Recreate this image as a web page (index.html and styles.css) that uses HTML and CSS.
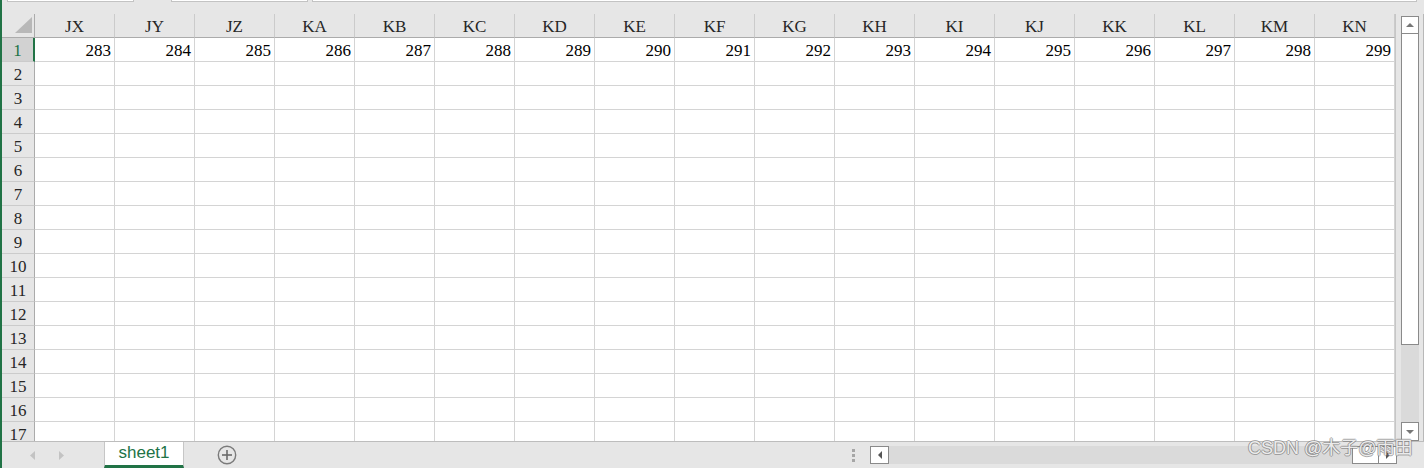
FILE: index.html
```html
<!DOCTYPE html>
<html lang="en">
<head>
    <meta charset="UTF-8">
    <meta name="viewport" content="width=device-width, initial-scale=1.0">
    <title>sheet1</title>
    <link rel="stylesheet" href="styles.css">
</head>
<body>
    <div class="app">
        <div class="topstrip">
            <div class="strip-box box-name"></div>
            <div class="strip-box box-fx"></div>
            <div class="strip-box box-formula"></div>
        </div>

        <div class="workarea">
            <div id="sheet" class="sheet">
                <div id="header-row" class="row header-row">
                    <div class="corner">
                        <svg width="33" height="23" viewBox="0 0 33 23">
                            <polygon points="13,19 30,3 30,19" fill="#b8b8b8"/>
                        </svg>
                    </div>
                </div>
            </div>

            <div class="vscroll">
                <div class="sbtn vbtn">
                    <svg width="10" height="6" viewBox="0 0 10 6"><polygon points="1,5 5,1 9,5" fill="#777"/></svg>
                </div>
                <div class="vthumb"></div>
                <div class="vtrack"></div>
                <div class="sbtn vbtn vbtn-down">
                    <svg width="10" height="6" viewBox="0 0 10 6"><polygon points="1,1 9,1 5,5" fill="#777"/></svg>
                </div>
            </div>
        </div>

        <div class="bottombar">
            <div class="tabnav">
                <svg class="nav-arrow" width="6" height="9" viewBox="0 0 6 9"><polygon points="5,0 5,9 0,4.5" fill="#c3c3c3"/></svg>
                <svg class="nav-arrow nav-next" width="6" height="9" viewBox="0 0 6 9"><polygon points="1,0 1,9 6,4.5" fill="#c3c3c3"/></svg>
            </div>
            <div class="sheet-tab">sheet1</div>
            <div class="add-sheet">
                <svg width="20" height="20" viewBox="0 0 20 20">
                    <circle cx="10" cy="10" r="8.7" fill="none" stroke="#7a7a7a" stroke-width="1.4"/>
                    <line x1="5" y1="10" x2="15" y2="10" stroke="#6a6a6a" stroke-width="1.6"/>
                    <line x1="10" y1="5" x2="10" y2="15" stroke="#6a6a6a" stroke-width="1.6"/>
                </svg>
            </div>
            <div class="spacer"></div>
            <div class="hscroll">
                <div class="split-dots"><span></span><span></span><span></span></div>
                <div class="sbtn hbtn">
                    <svg width="6" height="10" viewBox="0 0 6 10"><polygon points="5,1 5,9 1,5" fill="#555"/></svg>
                </div>
                <div class="htrack"></div>
                <div class="sbtn hthumb"></div>
                <div class="sbtn hbtn hbtn-right">
                    <svg width="6" height="10" viewBox="0 0 6 10"><polygon points="1,1 1,9 5,5" fill="#555"/></svg>
                </div>
            </div>
        </div>

        <div class="watermark">CSDN @木子@雨田</div>
    </div>

    <script>
        const columns = ['JX', 'JY', 'JZ', 'KA', 'KB', 'KC', 'KD', 'KE', 'KF',
                         'KG', 'KH', 'KI', 'KJ', 'KK', 'KL', 'KM', 'KN'];
        const sheet = document.getElementById('sheet');
        const headerRow = document.getElementById('header-row');

        columns.forEach(name => {
            const th = document.createElement('div');
            th.className = 'colhead';
            th.textContent = name;
            headerRow.appendChild(th);
        });

        for (let r = 1; r <= 17; r++) {
            const row = document.createElement('div');
            row.className = 'row';

            const head = document.createElement('div');
            head.className = r === 1 ? 'rowhead active' : 'rowhead';
            head.textContent = r;
            row.appendChild(head);

            columns.forEach((name, i) => {
                const cell = document.createElement('div');
                cell.className = 'cell';
                if (r === 1) cell.textContent = 283 + i;
                row.appendChild(cell);
            });

            sheet.appendChild(row);
        }
    </script>
</body>
</html>
```

FILE: styles.css
```css
body {
    margin: 0;
    padding: 0;
    font-family: 'Liberation Serif', serif;
    background-color: #e6e6e6;
    overflow: hidden;
}

.app {
    position: relative;
    width: 1424px;
    height: 468px;
    box-sizing: border-box;
    border-left: 2px solid #217346;
    background-color: #e6e6e6;
    display: flex;
    flex-direction: column;
}

/* remains of the formula bar */
.topstrip {
    height: 14px;
    display: flex;
    flex-shrink: 0;
}

.strip-box {
    height: 2px;
    box-sizing: border-box;
    background-color: #fff;
    border: 1px solid #c3c3c3;
    border-top: none;
}

.box-name {
    margin-left: 5px;
    width: 127px;
}

.box-fx {
    margin-left: 37px;
    width: 137px;
}

.box-formula {
    margin-left: 4px;
    width: 1105px;
}

.workarea {
    display: flex;
    height: 427px;
    flex-shrink: 0;
}

.sheet {
    width: 1393px;
    overflow: hidden;
    background-color: #fff;
}

.row {
    display: flex;
    height: 24px;
}

.corner,
.rowhead {
    width: 33px;
    flex-shrink: 0;
    box-sizing: border-box;
    background-color: #e6e6e6;
    border-right: 1px solid #ababab;
}

.corner {
    border-bottom: 1px solid #ababab;
}

.corner svg {
    display: block;
}

.colhead {
    width: 80px;
    flex-shrink: 0;
    box-sizing: border-box;
    background-color: #e6e6e6;
    border-right: 1px solid #cbcbcb;
    border-bottom: 1px solid #ababab;
    padding-top: 1px;
    text-align: center;
    font-size: 17px;
    line-height: 23px;
    color: #262626;
}

.rowhead {
    border-bottom: 1px solid #cbcbcb;
    padding-top: 1px;
    text-align: center;
    font-size: 17px;
    line-height: 23px;
    color: #262626;
}

.rowhead.active {
    background-color: #d2d2d2;
    border-right: 2px solid #217346;
    color: #217346;
}

.cell {
    width: 80px;
    flex-shrink: 0;
    box-sizing: border-box;
    border-right: 1px solid #d4d4d4;
    border-bottom: 1px solid #d4d4d4;
    padding-top: 1px;
    padding-right: 3px;
    text-align: right;
    font-size: 17px;
    line-height: 23px;
    color: #000;
}

/* scroll bars */
.sbtn {
    box-sizing: border-box;
    background-color: #fff;
    border: 1px solid #8a8a8a;
    display: flex;
    align-items: center;
    justify-content: center;
}

.vscroll {
    flex: 1;
    box-sizing: border-box;
    border-left: 1px solid #c6c6c6;
    border-right: 1px solid #b8b8b8;
    padding: 2px 0 0 5px;
    display: flex;
    flex-direction: column;
}

.vbtn {
    width: 18px;
    height: 18px;
    flex-shrink: 0;
}

.vbtn-down {
    height: 19px;
}

.vthumb {
    width: 18px;
    height: 312px;
    margin-top: -1px;
    box-sizing: border-box;
    background-color: #fff;
    border: 1px solid #8a8a8a;
    flex-shrink: 0;
}

.vtrack {
    width: 18px;
    flex: 1;
    background-color: #dadada;
}

.bottombar {
    height: 27px;
    box-sizing: border-box;
    border-top: 1px solid #bdbdbd;
    display: flex;
    flex-shrink: 0;
}

.tabnav {
    width: 102px;
    display: flex;
    align-items: center;
    padding-left: 28px;
    box-sizing: border-box;
}

.nav-next {
    margin-left: 22px;
}

.sheet-tab {
    width: 80px;
    box-sizing: border-box;
    background-color: #fff;
    border-left: 1px solid #c6c6c6;
    border-right: 1px solid #c6c6c6;
    border-bottom: 3px solid #217346;
    text-align: center;
    font-family: 'Liberation Sans', 'Noto Sans CJK SC', sans-serif;
    font-size: 17px;
    line-height: 22px;
    color: #217346;
}

.add-sheet {
    margin-left: 33px;
    display: flex;
    align-items: center;
}

.add-sheet svg {
    display: block;
}

.spacer {
    flex: 1;
}

.hscroll {
    width: 572px;
    display: flex;
    align-items: center;
    padding-right: 27px;
    box-sizing: border-box;
}

.split-dots {
    width: 3px;
    display: flex;
    flex-direction: column;
    gap: 2px;
    margin-right: 15px;
}

.split-dots span {
    display: block;
    width: 3px;
    height: 3px;
    background-color: #a6a6a6;
}

.hbtn {
    width: 19px;
    height: 18px;
    flex-shrink: 0;
}

.htrack {
    flex: 1;
    height: 18px;
    background-color: #dadada;
}

.hthumb {
    width: 27px;
    height: 18px;
    flex-shrink: 0;
}

.hbtn-right {
    margin-left: -1px;
}

.watermark {
    position: absolute;
    left: 1246px;
    top: 438px;
    font-family: 'Liberation Sans', 'Noto Sans CJK SC', sans-serif;
    font-size: 18px;
    line-height: 20px;
    color: rgba(250, 250, 250, 0.9);
    text-shadow: 1px 0 0 rgba(120, 120, 120, 0.6), -1px 0 0 rgba(120, 120, 120, 0.6),
                 0 1px 0 rgba(120, 120, 120, 0.6), 0 -1px 0 rgba(120, 120, 120, 0.6);
    white-space: nowrap;
}
```
